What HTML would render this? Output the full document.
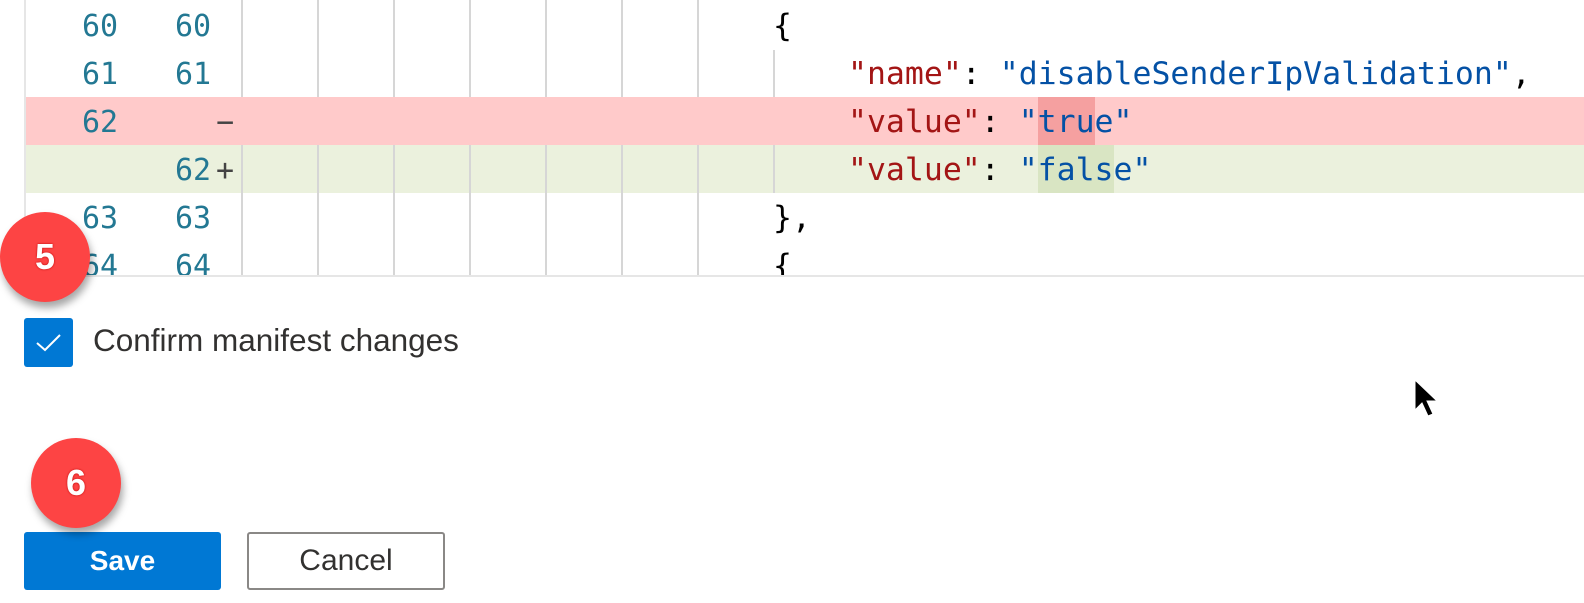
<!DOCTYPE html>
<html><head><meta charset="utf-8"><style>
body{margin:0;width:1584px;height:603px;background:#fff;position:relative;overflow:hidden;font-family:"Liberation Sans",sans-serif}
.ed{position:absolute;left:24px;top:0;width:1560px;height:275px;border-left:2px solid #e6e6e6;border-bottom:2px solid #e6e6e6;overflow:hidden}
.row{position:absolute;left:0;width:1560px;height:48px}
.ln{position:absolute;font:30px "DejaVu Sans Mono",monospace;color:#237893;top:8px}
.g{position:absolute;top:0;width:2px;background:#d6d6d6}
.code{position:absolute;font:31.5px "DejaVu Sans Mono",monospace;top:7px;white-space:pre;color:#000}
.k{color:#a31515}.s{color:#0451a5}
.badge{position:absolute;width:90px;height:90px;border-radius:50%;background:#fd4444;box-shadow:2px 6px 8px rgba(0,0,0,.35);color:#fff;font:bold 36px "Liberation Sans",sans-serif;text-align:center;line-height:90px;text-shadow:0 0 2px #b00}
</style></head><body>
<div class="ed">
 <div class="row" style="top:1px"><span class="ln" style="left:56px">60</span><span class="ln" style="left:149px">60</span><span class="code" style="left:747px">{</span></div>
 <div class="row" style="top:49px"><span class="ln" style="left:56px">61</span><span class="ln" style="left:149px">61</span><span class="code" style="left:822px"><span class="k">"name"</span>: <span class="s">"disableSenderIpValidation"</span>,</span></div>
 <div class="row" style="top:97px;background:#ffcaca"><span class="ln" style="left:56px">62</span><span class="ln" style="left:190px;color:#444">−</span><div style="position:absolute;left:1012px;top:0;width:57px;height:48px;background:#f5a0a0"></div><span class="code" style="left:822px"><span class="k">"value"</span>: <span class="s">"true"</span></span></div>
 <div class="row" style="top:145px;background:#ebf1dd"><span class="ln" style="left:149px">62</span><span class="ln" style="left:190px;color:#444">+</span><div style="position:absolute;left:1012px;top:0;width:76px;height:48px;background:#d9e5c3"></div><span class="code" style="left:822px"><span class="k">"value"</span>: <span class="s">"false"</span></span></div>
 <div class="row" style="top:193px"><span class="ln" style="left:56px">63</span><span class="ln" style="left:149px">63</span><span class="code" style="left:747px">},</span></div>
 <div class="row" style="top:241px"><span class="ln" style="left:56px">64</span><span class="ln" style="left:149px">64</span><span class="code" style="left:747px">{</span></div>
 <div class="g" style="left:215px;top:0;height:97px"></div><div class="g" style="left:215px;top:145px;height:130px"></div>
 <div class="g" style="left:291px;top:0;height:97px"></div><div class="g" style="left:291px;top:145px;height:130px"></div>
 <div class="g" style="left:367px;top:0;height:97px"></div><div class="g" style="left:367px;top:145px;height:130px"></div>
 <div class="g" style="left:443px;top:0;height:97px"></div><div class="g" style="left:443px;top:145px;height:130px"></div>
 <div class="g" style="left:519px;top:0;height:97px"></div><div class="g" style="left:519px;top:145px;height:130px"></div>
 <div class="g" style="left:595px;top:0;height:97px"></div><div class="g" style="left:595px;top:145px;height:130px"></div>
 <div class="g" style="left:671px;top:0;height:97px"></div><div class="g" style="left:671px;top:145px;height:130px"></div>
 <div class="g" style="left:747px;top:50px;height:47px"></div><div class="g" style="left:747px;top:145px;height:48px"></div>
</div>
<div style="position:absolute;left:24px;top:318px;width:49px;height:49px;background:#0078d4;border-radius:3px">
<svg width="49" height="49"><path d="M13 25 L21 32 L36 17" stroke="#fff" stroke-width="2" fill="none"/></svg></div>
<div style="position:absolute;left:93px;top:322px;font-size:31.5px;color:#323130">Confirm manifest changes</div>
<div style="position:absolute;left:24px;top:532px;width:197px;height:58px;background:#0078d4;border-radius:3px;color:#fff;font-weight:bold;font-size:28px;text-align:center;line-height:58px">Save</div>
<div style="position:absolute;left:247px;top:532px;width:194px;height:54px;border:2px solid #8a8886;border-radius:3px;color:#323130;font-size:30px;text-align:center;line-height:54px">Cancel</div>
<div class="badge" style="left:0;top:212px">5</div>
<div class="badge" style="left:31px;top:438px">6</div>
<svg style="position:absolute;left:1413px;top:378px" width="30" height="42"><path d="M2 2 L2 32 L9 25 L15 38 L20 36 L14 23 L24 23 Z" fill="#000" stroke="#fff" stroke-width="1"/></svg>
</body></html>
